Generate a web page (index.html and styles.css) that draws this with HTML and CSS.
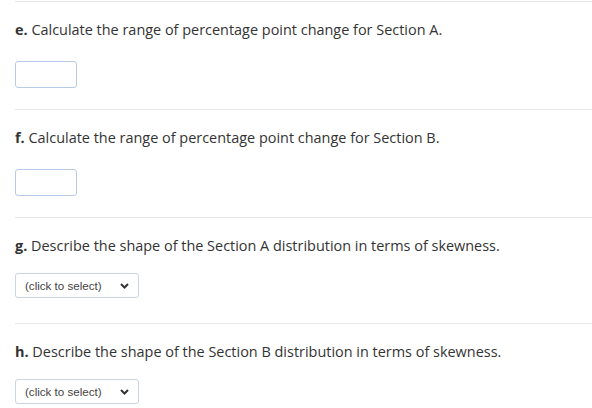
FILE: index.html
```html
<!DOCTYPE html>
<html>
<head>
<meta charset="utf-8">
<link rel="stylesheet" href="styles.css">
</head>
<body>
<div class="questions">
  <section class="q q-input">
    <p class="prompt"><b>e.</b> Calculate the range of percentage point change for Section A.</p>
    <div class="answer"><span class="textbox"></span></div>
  </section>
  <section class="q q-input">
    <p class="prompt"><b>f.</b> Calculate the range of percentage point change for Section B.</p>
    <div class="answer"><span class="textbox"></span></div>
  </section>
  <section class="q q-select">
    <p class="prompt"><b>g.</b> Describe the shape of the Section A distribution in terms of skewness.</p>
    <div class="answer">
      <span class="select"><span class="select-text">(click to select)</span>
        <svg class="chev" width="9" height="6" viewBox="0 0 9 6"><polyline points="1,1 4.5,4.5 8,1" fill="none" stroke="#333" stroke-width="2"/></svg>
      </span>
    </div>
  </section>
  <section class="q q-select">
    <p class="prompt"><b>h.</b> Describe the shape of the Section B distribution in terms of skewness.</p>
    <div class="answer">
      <span class="select"><span class="select-text">(click to select)</span>
        <svg class="chev" width="9" height="6" viewBox="0 0 9 6"><polyline points="1,1 4.5,4.5 8,1" fill="none" stroke="#333" stroke-width="2"/></svg>
      </span>
    </div>
  </section>
</div>
</body>
</html>
```

FILE: styles.css
```css
html, body {
  margin: 0;
  padding: 0;
  background: #fff;
}
body {
  padding-top: 1px;
  font-family: "Open Sans", "Liberation Sans", sans-serif;
  color: #333;
  overflow: hidden;
}
.questions {
  padding-left: 15px;
}
.q {
  border-top: 1px solid #e8e8e8;
  padding-top: 18px;
}
.q-input {
  padding-bottom: 21px;
}
.q-select {
  padding-bottom: 25px;
}
.q:last-child {
  padding-bottom: 0;
}
.prompt {
  margin: 0;
  font-size: 14.45px;
  line-height: 20px;
  white-space: nowrap;
}
.prompt b {
  font-weight: 700;
}
.q-input .answer {
  margin-top: 21px;
}
.q-select .answer {
  margin-top: 17px;
}
.answer {
  display: flex;
}
.textbox {
  display: block;
  width: 60px;
  height: 25px;
  border: 1px solid #b6cbe8;
  border-radius: 3px;
}
.select {
  display: flex;
  align-items: center;
  justify-content: space-between;
  box-sizing: border-box;
  width: 124px;
  height: 25px;
  padding: 0 9px 0 9px;
  border: 1px solid #c9d5e4;
  border-radius: 3px;
  font-family: "Liberation Sans", Arial, sans-serif;
  font-size: 11.6px;
  color: #444;
}
.chev {
  display: block;
}
```
